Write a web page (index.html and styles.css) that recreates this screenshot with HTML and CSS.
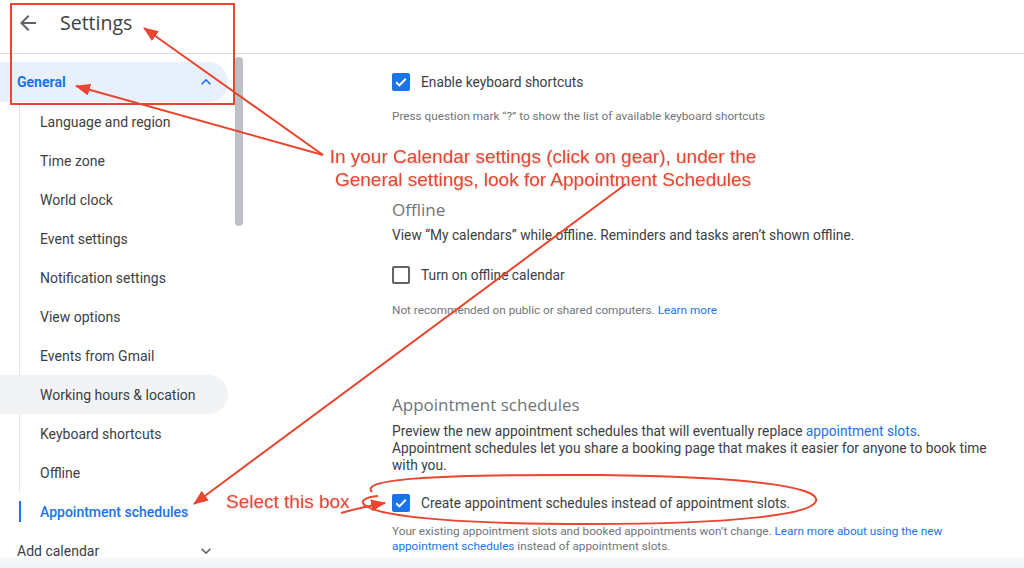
FILE: index.html
```html
<!DOCTYPE html>
<html lang="en">
<head>
    <meta charset="UTF-8" />
    <meta name="viewport" content="width=device-width, initial-scale=1.0" />
    <title>Settings</title>
    <link rel="stylesheet" href="styles.css">
</head>
<body>
    <header class="topbar">
        <button class="back-btn" aria-label="Back">
            <svg viewBox="0 0 24 24" width="24" height="24"><path d="M20 11H7.83l5.59-5.59L12 4l-8 8 8 8 1.41-1.41L7.83 13H20v-2z"/></svg>
        </button>
        <h1>Settings</h1>
    </header>

    <div class="layout">
        <aside class="sidebar">
            <nav class="nav">
                <div class="nav-group open">
                    <span>General</span>
                    <svg viewBox="0 0 24 24" width="20" height="20"><path d="M12 8l-6 6 1.41 1.41L12 10.83l4.59 4.58L18 14z"/></svg>
                </div>
                <ul class="nav-sub">
                    <li>Language and region</li>
                    <li>Time zone</li>
                    <li>World clock</li>
                    <li>Event settings</li>
                    <li>Notification settings</li>
                    <li>View options</li>
                    <li>Events from Gmail</li>
                    <li class="hover">Working hours &amp; location</li>
                    <li>Keyboard shortcuts</li>
                    <li>Offline</li>
                    <li class="active">Appointment schedules</li>
                </ul>
                <div class="nav-group">
                    <span>Add calendar</span>
                    <svg viewBox="0 0 24 24" width="20" height="20"><path d="M16.59 8.59L12 13.17 7.41 8.59 6 10l6 6 6-6z"/></svg>
                </div>
            </nav>
            <div class="scroll-track"><div class="scroll-thumb"></div></div>
        </aside>

        <main class="content">
            <section>
                <label class="check-row">
                    <span class="box checked"><svg viewBox="0 0 18 18" width="18" height="18"><path d="M4.2 9.3l3.1 3.1 6.5-6.6" /></svg></span>
                    Enable keyboard shortcuts
                </label>
                <p class="hint">Press question mark “?” to show the list of available keyboard shortcuts</p>
            </section>

            <section class="group offline">
                <h2>Offline</h2>
                <p class="desc">View “My calendars” while offline. Reminders and tasks aren’t shown offline.</p>
                <label class="check-row">
                    <span class="box"></span>
                    Turn on offline calendar
                </label>
                <p class="hint">Not recommended on public or shared computers. <a href="#">Learn more</a></p>
            </section>

            <section class="group">
                <h2>Appointment schedules</h2>
                <p class="desc para">Preview the new appointment schedules that will eventually replace <a href="#">appointment slots</a>. Appointment schedules let you share a booking page that makes it easier for anyone to book time with you.</p>
                <label class="check-row">
                    <span class="box checked"><svg viewBox="0 0 18 18" width="18" height="18"><path d="M4.2 9.3l3.1 3.1 6.5-6.6" /></svg></span>
                    Create appointment schedules instead of appointment slots.
                </label>
                <p class="hint tight">Your existing appointment slots and booked appointments won’t change. <a href="#">Learn more about using the new appointment schedules</a> instead of appointment slots.</p>
            </section>
        </main>
    </div>

    <div class="bottom-fade"></div>

    <!-- callouts drawn over the settings page -->
    <svg class="notes" viewBox="0 0 1024 568" width="1024" height="568">
        <defs>
            <marker id="head" markerUnits="userSpaceOnUse" markerWidth="16" markerHeight="12" refX="14" refY="6" orient="auto">
                <path d="M0 0L15 6L0 12z" fill="#e9452f"/>
            </marker>
        </defs>
        <rect x="11" y="4" width="223" height="100" fill="none" stroke="#e9452f" stroke-width="2"/>
        <line x1="323" y1="155" x2="144" y2="28" class="arrow"/>
        <line x1="323" y1="155" x2="76" y2="86" class="arrow"/>
        <line x1="626" y1="184" x2="194" y2="504" class="arrow"/>
        <path d="M341 513Q362 507 385 503" class="arrow"/>
        <path d="M372 492C360 480 420 474 600 475C760 477 820 488 816 501C812 514 740 524 590 524C440 524 380 515 366 506C358 501 366 497 378 496" class="ring"/>
        <text x="543" y="163" class="note-text">In your Calendar settings (click on gear), under the</text>
        <text x="543" y="186" class="note-text">General settings, look for Appointment Schedules</text>
        <text x="226" y="508" class="note-text left">Select this box</text>
    </svg>
</body>
</html>
```

FILE: styles.css
```css
body {
    margin: 0;
    font-family: Roboto, "Liberation Sans", sans-serif;
    color: #3c4043;
    background-color: #ffffff;
    height: 568px;
    overflow: hidden;
    position: relative;
}

.topbar {
    height: 54px;
    border-bottom: 1px solid #dadce0;
    display: flex;
    align-items: center;
    padding-left: 16px;
    box-sizing: border-box;
}

.back-btn {
    border: 0;
    background: none;
    padding: 0;
    width: 24px;
    height: 24px;
    margin-top: -7px;
    fill: #5f6368;
}

.topbar h1 {
    margin: -8px 0 0 20px;
    font-family: "Open Sans", Roboto, sans-serif;
    font-size: 19.5px;
    font-weight: 400;
    color: #3c4043;
}

.layout {
    display: flex;
}

.sidebar {
    display: flex;
    width: 243px;
    flex-shrink: 0;
}

.nav {
    width: 228px;
    padding-top: 8px;
}

.nav-group {
    height: 40px;
    display: flex;
    align-items: center;
    justify-content: space-between;
    padding: 0 12px 0 17px;
    font-size: 14px;
    border-radius: 0 20px 20px 0;
    fill: #5f6368;
}

.nav-group.open {
    background-color: #e8f0fe;
    color: #1a73e8;
    font-weight: 700;
    fill: #1a73e8;
}

.nav-group:last-child {
    height: 39px;
}

.nav-sub {
    list-style: none;
    margin: 0;
    padding: 0;
}

.nav-sub li {
    position: relative;
    height: 39px;
    line-height: 40px;
    padding-left: 40px;
    font-size: 14px;
    border-radius: 0 20px 20px 0;
}

.nav-sub li::before {
    content: "";
    position: absolute;
    left: 19px;
    top: 0;
    bottom: 0;
    width: 1px;
    background-color: #e3e5e8;
}

.nav-sub li.hover {
    background-color: #f1f3f4;
}

.nav-sub li.hover::before {
    display: none;
}

.nav-sub li.active {
    color: #1a73e8;
    font-weight: 500;
}

.nav-sub li.active::before {
    top: 9px;
    bottom: 9px;
    width: 2px;
    background-color: #1a73e8;
}

.scroll-track {
    margin-left: 7px;
    width: 8px;
    padding-top: 3px;
}

.scroll-thumb {
    height: 169px;
    border-radius: 4px;
    background-color: #bdc1c6;
}

.content {
    padding: 19px 0 0 149px;
    width: 600px;
}

section {
    margin: 0;
}

.group {
    margin-top: 75px;
}

.group.offline {
    margin-top: 74px;
}

.group h2 {
    margin: 0;
    height: 24px;
    line-height: 24px;
    font-family: "Open Sans", Roboto, sans-serif;
    font-size: 17px;
    font-weight: 400;
    color: #70757a;
}

.check-row {
    display: flex;
    align-items: center;
    height: 18px;
    gap: 11px;
    font-size: 13.75px;
}

.box {
    width: 18px;
    height: 18px;
    box-sizing: border-box;
    border: 2px solid #5f6368;
    border-radius: 2px;
    flex-shrink: 0;
}

.box.checked {
    border: 0;
    background-color: #1a73e8;
}

.box svg {
    display: block;
    fill: none;
    stroke: #ffffff;
    stroke-width: 2;
}

.hint {
    margin: 17px 0 0 0;
    font-size: 11.75px;
    line-height: 16px;
    color: #70757a;
}

.offline .hint {
    margin-top: 18px;
}

.hint.tight {
    margin-top: 12px;
    line-height: 15px;
}

a {
    color: #1a73e8;
    text-decoration: none;
}

.desc {
    margin: 3px 0 21px 0;
    font-size: 13.75px;
    line-height: 20px;
}

.desc.para {
    margin: 6px 0 20px 0;
    line-height: 17px;
}

.bottom-fade {
    position: absolute;
    left: 0;
    right: 0;
    bottom: 0;
    height: 11px;
    background: linear-gradient(#f8f9fa, #f1f3f4);
}

.notes {
    position: absolute;
    top: 0;
    left: 0;
    pointer-events: none;
}

.arrow {
    fill: none;
    stroke: #e9452f;
    stroke-width: 2;
    marker-end: url(#head);
}

.ring {
    fill: none;
    stroke: #e9452f;
    stroke-width: 2;
}

.note-text {
    font-family: "Liberation Sans", Arial, sans-serif;
    font-size: 19px;
    fill: #e9452f;
    text-anchor: middle;
    filter: drop-shadow(0 1px 1px rgba(0, 0, 0, 0.2));
}

.note-text.left {
    text-anchor: start;
}
```
